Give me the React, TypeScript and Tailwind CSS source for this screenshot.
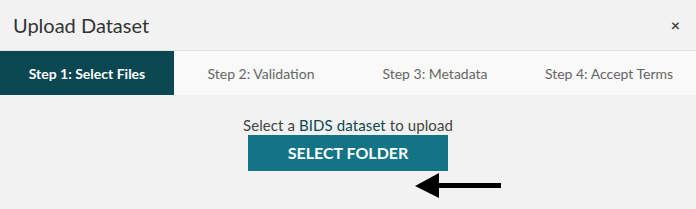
import React from "react";

export default function App() {
  const tabs = ["Step 1: Select Files", "Step 2: Validation", "Step 3: Metadata", "Step 4: Accept Terms"];
  return (
    <div className="w-[696px] h-[209px] bg-[#f2f2f2] overflow-hidden" style={{ fontFamily: "Lato, 'Open Sans', sans-serif" }}>
      <div className="h-[51px] flex items-center justify-between pl-[13px] pr-[16px] border-b border-[#e2e2e2]">
        <span className="text-[20px] text-[#333]">Upload Dataset</span>
        <span className="text-[16px] font-bold text-[#444] leading-none">×</span>
      </div>
      <div className="grid grid-cols-4 h-[44px] bg-[#f9f9f9]">
        {tabs.map((t, i) => (
          <div
            key={t}
            className={
              i === 0
                ? "flex items-center justify-center bg-[#0b4751] text-white text-[14px] font-bold"
                : "flex items-center justify-center text-[#666] text-[14px]"
            }
          >
            {t}
          </div>
        ))}
      </div>
      <div className="flex flex-col items-center pt-[21px]">
        <div className="text-[15px] text-[#444] leading-[18px] tracking-[0.1px]">
          Select a <span className="text-[#0b4751]">BIDS dataset</span> to upload
        </div>
        <div className="mt-[1px] w-[200px] h-[36px] bg-[#137486] text-white text-[16px] font-bold flex items-center justify-center">
          SELECT FOLDER
        </div>
        <div className="w-[200px] flex justify-end">
          <svg width="92" height="28" viewBox="0 0 92 28" className="mr-[-56px] mt-[1px]">
            <polygon points="3,14 27,1 27,26" fill="#000" />
            <rect x="26" y="11" width="63" height="5" fill="#000" />
          </svg>
        </div>
      </div>
    </div>
  );
}
